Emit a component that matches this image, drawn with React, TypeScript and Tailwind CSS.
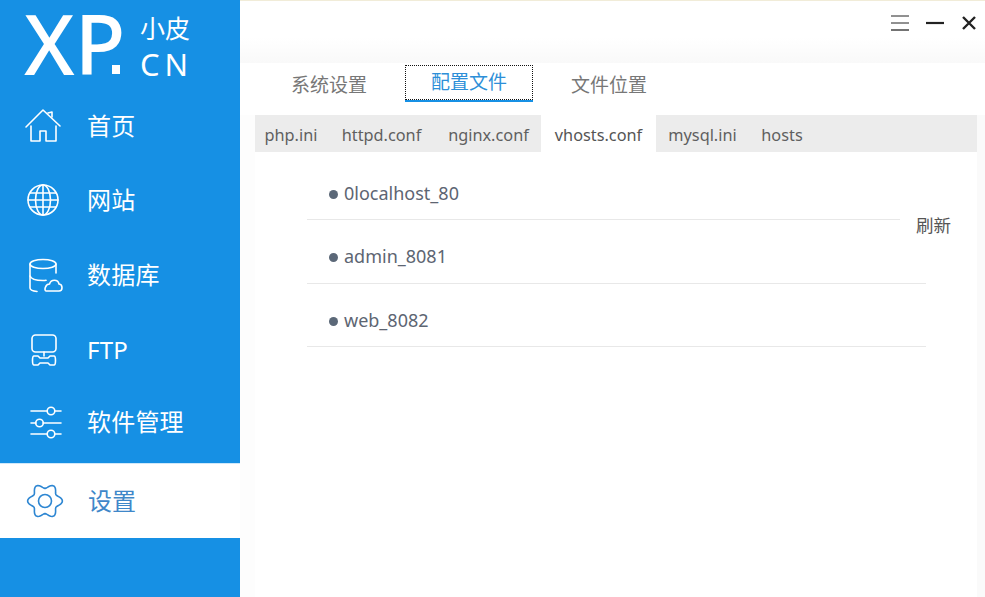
import type { ReactNode } from "react";

const FONT = "font-['Noto_Sans','Noto_Sans_CJK_SC',sans-serif]";

function Stroke({ children, className }: { children: ReactNode; className?: string }) {
  return (
    <svg
      viewBox="0 0 40 40"
      fill="none"
      stroke="currentColor"
      strokeWidth="1.6"
      strokeLinecap="round"
      strokeLinejoin="round"
      className={className ?? "h-10 w-10"}
    >
      {children}
    </svg>
  );
}

const HomeIcon = () => (
  <Stroke>
    <path d="M3 21 20 4l17 16" />
    <path d="M29 11V6l-4 1" />
    <path d="M8 20v15h9V25h6v10h10V20" />
  </Stroke>
);

const GlobeIcon = () => (
  <Stroke>
    <circle cx="20" cy="20" r="15" />
    <ellipse cx="20" cy="20" rx="7.500" ry="15" />
    <path d="M20 5v30M7 13h26M5 20h30M7 27h26" />
  </Stroke>
);

const DatabaseIcon = () => (
  <Stroke>
    <ellipse cx="20" cy="9" rx="13" ry="4.500" />
    <path d="M7 9v24c0 2 3 3 7 3.500" />
    <path d="M33 9v9" />
    <path d="M7 21c1 3 7 4.500 13 4.500 1 0 2 0 3-.2" />
    <path d="M23 36h13c4 0 4-6.500 0-7-1-5-8-5-9.500 0-4.500 0-5.500 7-3.500 7Z" />
  </Stroke>
);

const FtpIcon = () => (
  <Stroke>
    <rect x="9" y="5" width="24" height="17" rx="3.500" />
    <path d="M21 22v4" />
    <path d="M11 26h4l2 2h8l2-2h4c2 0 2 9 0 9h-4l-2-2h-8l-2 2h-4c-2 0-2-9 0-9Z" />
  </Stroke>
);

const SlidersIcon = () => (
  <Stroke>
    <path d="M8 9h16M32 9h6M8 21h5M20 21h18M8 32h16M32 32h6" />
    <circle cx="28" cy="9" r="3.800" />
    <circle cx="16.500" cy="21" r="3.800" />
    <circle cx="28" cy="32" r="3.800" />
  </Stroke>
);

// six soft lobes round the hub
const gearPath = Array.from({ length: 72 }, (_, i) => {
  const a = (i / 72) * Math.PI * 2;
  const r = 15 + 2.4 * Math.cos(6 * a);
  return `${i === 0 ? "M" : "L"}${(20 + r * Math.cos(a)).toFixed(2)} ${(20 + r * Math.sin(a)).toFixed(2)}`;
}).join(" ") + "Z";

const GearIcon = () => (
  <Stroke>
    <path d={gearPath} />
    <circle cx="20" cy="20" r="6.500" />
  </Stroke>
);

const menu = [
  { label: "首页", icon: <HomeIcon />, row: "h-[74px]" },
  { label: "网站", icon: <GlobeIcon />, row: "h-[74px]" },
  { label: "数据库", icon: <DatabaseIcon />, row: "h-[76px]" },
  { label: "FTP", icon: <FtpIcon />, row: "h-[74px]" },
  { label: "软件管理", icon: <SlidersIcon />, row: "h-[76px] pb-[6px]" },
];

const fileTabs = [
  { label: "php.ini", w: "w-[72px]" },
  { label: "httpd.conf", w: "w-[109px]" },
  { label: "nginx.conf", w: "w-[105px]" },
  { label: "vhosts.conf", w: "w-[115px]", active: true },
  { label: "mysql.ini", w: "w-[93px]" },
  { label: "hosts", w: "w-[66px]" },
];

function Sidebar() {
  return (
    <aside className="flex h-full w-[240px] shrink-0 flex-col bg-[#1690e4] text-white">
      <div className="flex h-[89px] items-start pl-[24px]">
        <div className="flex w-[116px] items-start">
          <span className="text-[83px] leading-[86px] font-medium">XP</span>
          <span className="mt-[65px] -ml-[13px] h-[9px] w-[8px] shrink-0 bg-white" />
        </div>
        <div className="flex flex-col pt-[16px] leading-none">
          <span className="text-[25px]">小皮</span>
          <span className="mt-[8px] text-[31px] tracking-[5px]">CN</span>
        </div>
      </div>
      {menu.map((m) => (
        <div key={m.label} className={`flex ${m.row} items-center pl-[23px]`}>
          {m.icon}
          <span className="ml-[24px] text-[24px] tracking-[0.2px]">{m.label}</span>
        </div>
      ))}
      <div className="flex h-[75px] items-center border-t border-[#cfe8fa] bg-white pl-[25px]">
        <span className="text-[#2d86d2]">
          <GearIcon />
        </span>
        <span className="ml-[23px] text-[24px] text-[#3f87c9]">设置</span>
      </div>
    </aside>
  );
}

function Main() {
  return (
    <main className="flex h-full min-w-0 flex-1 flex-col bg-white text-[#555]">
      <div className="flex h-[63px] flex-col bg-gradient-to-b from-white from-60% to-[#f9f9f9]">
        <div className="h-px bg-[#f1ecd8]" />
        <div className="flex justify-end gap-[17px] pt-[14px] pr-[8px]">
          <svg viewBox="0 0 18 16" className="h-[16px] w-[18px]" fill="none">
            <path d="M0 1h18M0 8h18" stroke="#222" strokeWidth="1" />
            <path d="M0 15h18" stroke="#444" strokeWidth="1.500" />
          </svg>
          <svg viewBox="0 0 18 16" className="h-[16px] w-[18px]" stroke="#222" fill="none">
            <path d="M0 8h18" strokeWidth="2.200" />
          </svg>
          <svg viewBox="0 0 16 16" className="h-[16px] w-[16px]" stroke="#222" fill="none">
            <path d="M2 2l12 12M14 2 2 14" strokeWidth="2.400" />
          </svg>
        </div>
      </div>

      <div className="flex h-[52px] items-start pt-[2px] pl-[51px] text-[19px]">
        <div className="mt-[7px] w-[114px] leading-[26px] text-[#777]">系统设置</div>
        <div className="h-[37px] w-[128px] border-b-2 border-[#1690e4]">
          <div className="flex h-[35px] items-center justify-center border border-dotted border-[#111] text-[#2d8fd8]">
            配置文件
          </div>
        </div>
        <div className="mt-[7px] ml-[38px] leading-[26px] text-[#777]">文件位置</div>
      </div>

      <div className="flex flex-1">
        <div className="w-[15px] shrink-0 bg-[#fdfdfd]" />
        <div className="flex min-w-0 flex-1 flex-col">
          <div className="flex h-[37px] bg-[#ececec] text-[16.3px]">
            {fileTabs.map((t) => (
              <div
                key={t.label}
                className={`flex ${t.w} items-center justify-center pt-[4px] ${t.active ? "bg-white text-[#555]" : "text-[#5f5f5f]"}`}
              >
                {t.label}
              </div>
            ))}
          </div>

          <div className="flex flex-col pt-[4px] pl-[52px] text-[18px] text-[#5d6572]">
            <Row label="0localhost_80" width="w-[593px]" h="h-[64px] pt-[14px]" />
            <Row label="admin_8081" width="w-[619px]" h="h-[64px] pt-[12px]" />
            <Row label="web_8082" width="w-[619px]" h="h-[63px] pt-[12px]" />
          </div>
        </div>
        <div className="w-[8px] shrink-0 bg-[#fafafa]" />
      </div>
    </main>
  );
}

function Row({ label, width, h }: { label: string; width: string; h: string }) {
  const isFirst = label.startsWith("0");
  return (
    <div className="relative">
      <div className={`flex ${h} ${width} items-center border-b border-[#e8e8e8] pl-[22px]`}>
        <span className="h-[9px] w-[9px] rounded-full bg-[#5b6878]" />
        <span className="ml-[6px] -mt-[2px]">{label}</span>
      </div>
      {isFirst && (
        <span className="absolute left-[609px] top-[56px] text-[17.5px] whitespace-nowrap text-[#555]">刷新</span>
      )}
    </div>
  );
}

export default function App() {
  return (
    <div className={`flex h-[597px] w-[985px] overflow-hidden ${FONT}`}>
      <Sidebar />
      <Main />
    </div>
  );
}
